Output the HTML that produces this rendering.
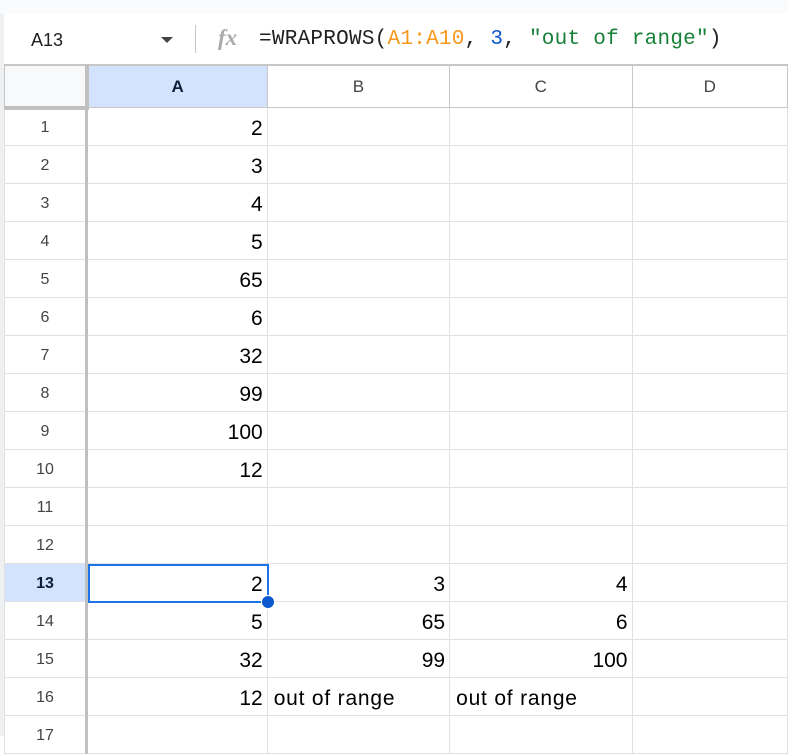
<!DOCTYPE html>
<html><head><style>
*{margin:0;padding:0;box-sizing:border-box}
body{width:788px;height:736px;overflow:hidden;background:#fff;font-family:"Liberation Sans",Arial,sans-serif;position:relative}
.top{position:absolute;left:0;top:0;width:788px;height:14px;background:#f9fbfd}
.lb{position:absolute;left:0;top:14px;width:4px;height:722px;background:#eef0f2}
.fb{position:absolute;left:4px;top:14px;width:784px;height:51px;border-bottom:1px solid #c7c7c7;background:#fff}
.nm{position:absolute;left:27px;top:16px;font-size:18px;color:#1f1f1f}
.dd{position:absolute;left:157px;top:23px;width:0;height:0;border-left:6px solid transparent;border-right:6px solid transparent;border-top:6px solid #444}
.sep{position:absolute;left:191px;top:11px;width:1px;height:28px;background:#c7c7c7}
.fx{position:absolute;left:214px;top:11px;font-family:"Liberation Serif",serif;font-style:italic;font-size:23px;color:#aaa;font-weight:bold}
.f{position:absolute;left:255px;top:14px;font-family:"Liberation Mono",monospace;font-size:21px;color:#1f1f1f;letter-spacing:0.25px}
.o{color:#f7981d}.b{color:#1155cc}.g{color:#188038}
table{position:absolute;left:4px;top:65px;border-collapse:collapse;table-layout:fixed}
td{border:1px solid #e1e1e1;height:38px;font-size:21px;color:#000;padding:5px 4px 0;text-align:right;white-space:nowrap;overflow:visible}
tr.h td{height:42px;padding:0;background:#fff;text-align:center;font-size:17px;color:#444;border-color:#c7c7c7}
td.r{background:#fff;text-align:center;font-size:16px;color:#444;border-color:#e1e1e1;border-right:3px solid #c0c0c0;padding:2px 0 0}
tr.h td.A{background:#d3e3fd;color:#0b1f3a;font-weight:bold}
td.s{background:#d3e3fd!important;color:#0b1f3a!important;font-weight:bold}
td.l{text-align:left;padding-left:6px;letter-spacing:0.8px}
.sel{position:absolute;left:88px;top:564px;width:181px;height:39px;border:2px solid #1a73e8}
.dot{position:absolute;left:261px;top:595px;width:14px;height:14px;border-radius:50%;background:#0b57d0;border:1px solid #fff}
</style></head><body>
<div class="top"></div><div class="lb"></div>
<div class="fb"><div class="nm">A13</div><div class="dd"></div><div class="sep"></div><div class="fx">fx</div>
<div class="f">=WRAPROWS(<span class="o">A1:A10</span>, <span class="b">3</span>, <span class="g">"out of range"</span>)</div></div>
<table>
<colgroup><col style="width:84px"><col style="width:185px"><col style="width:184px"><col style="width:184px"><col style="width:160px"></colgroup>
<tr class="h"><td style="background:#f8f9fa;border-bottom:4px solid #c0c0c0;border-right:4px solid #c0c0c0"></td><td class="A">A</td><td>B</td><td>C</td><td>D</td></tr>
<tr><td class="r">1</td><td>2</td><td></td><td></td><td></td></tr>
<tr><td class="r">2</td><td>3</td><td></td><td></td><td></td></tr>
<tr><td class="r">3</td><td>4</td><td></td><td></td><td></td></tr>
<tr><td class="r">4</td><td>5</td><td></td><td></td><td></td></tr>
<tr><td class="r">5</td><td>65</td><td></td><td></td><td></td></tr>
<tr><td class="r">6</td><td>6</td><td></td><td></td><td></td></tr>
<tr><td class="r">7</td><td>32</td><td></td><td></td><td></td></tr>
<tr><td class="r">8</td><td>99</td><td></td><td></td><td></td></tr>
<tr><td class="r">9</td><td>100</td><td></td><td></td><td></td></tr>
<tr><td class="r">10</td><td>12</td><td></td><td></td><td></td></tr>
<tr><td class="r">11</td><td></td><td></td><td></td><td></td></tr>
<tr><td class="r">12</td><td></td><td></td><td></td><td></td></tr>
<tr><td class="r s">13</td><td>2</td><td>3</td><td>4</td><td></td></tr>
<tr><td class="r">14</td><td>5</td><td>65</td><td>6</td><td></td></tr>
<tr><td class="r">15</td><td>32</td><td>99</td><td>100</td><td></td></tr>
<tr><td class="r">16</td><td>12</td><td class="l">out of range</td><td class="l">out of range</td><td></td></tr>
<tr><td class="r">17</td><td></td><td></td><td></td><td></td></tr>
</table>
<div class="sel"></div><div class="dot"></div>
</body></html>
